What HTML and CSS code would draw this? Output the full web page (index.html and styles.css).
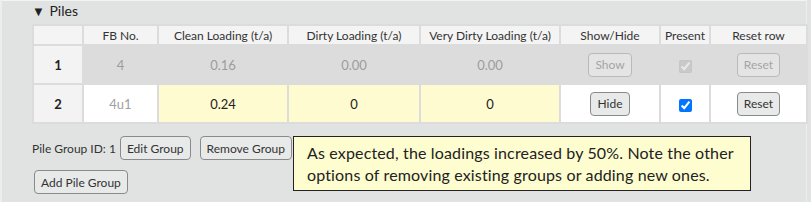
FILE: index.html
```html
<!DOCTYPE html>
<html>

<head>
    <link rel="stylesheet" href="styles.css">
</head>

<body>
    <div class="panel">
        <div class="toggle"><span class="arrow">▼</span> Piles</div>

        <table class="piles">
            <colgroup>
                <col style="width: 50px">
                <col style="width: 75px">
                <col style="width: 130px">
                <col style="width: 132px">
                <col style="width: 140px">
                <col style="width: 100px">
                <col style="width: 50px">
                <col style="width: 97px">
            </colgroup>
            <tr class="head">
                <th></th>
                <th>FB No.</th>
                <th>Clean Loading (t/a)</th>
                <th>Dirty Loading (t/a)</th>
                <th>Very Dirty Loading (t/a)</th>
                <th>Show/Hide</th>
                <th>Present</th>
                <th>Reset row</th>
            </tr>
            <tr class="off">
                <td class="num">1</td>
                <td>4</td>
                <td>0.16</td>
                <td>0.00</td>
                <td>0.00</td>
                <td><button disabled>Show</button></td>
                <td><input type="checkbox" checked disabled></td>
                <td><button disabled>Reset</button></td>
            </tr>
            <tr class="on">
                <td class="num">2</td>
                <td class="fb">4u1</td>
                <td class="edit">0.24</td>
                <td class="edit">0</td>
                <td class="edit">0</td>
                <td><button>Hide</button></td>
                <td><input type="checkbox" checked></td>
                <td><button>Reset</button></td>
            </tr>
        </table>

        <div class="group">
            <span class="label">Pile Group ID: 1</span>
            <button>Edit Group</button>
            <button class="remove">Remove Group</button>
        </div>
        <div class="add">
            <button>Add Pile Group</button>
        </div>

        <div class="note">
            As expected, the loadings increased by 50%. Note the other<br>
            options of removing existing groups or adding new ones.
        </div>
    </div>
</body>

</html>
```

FILE: styles.css
```css
html {
    background: #e1e3e2;
}

body {
    margin: 0;
    font-family: Lato, 'Open Sans', sans-serif;
    font-size: 12px;
    color: #333;
}

.panel {
    position: relative;
    height: 202px;
    width: 807px;
    border-top: 1px solid #f2f3f3;
    border-left: 2px solid #eceded;
    border-right: 1px solid #eceded;
    box-sizing: border-box;
    padding-left: 30px;
}

.toggle {
    height: 23px;
    line-height: 20px;
    font-size: 14px;
    color: #222;
}

.arrow {
    font-size: 13px;
    margin-right: 1px;
}

.piles {
    table-layout: fixed;
    width: 774px;
    border-collapse: collapse;
    text-align: center;
}

.piles th,
.piles td {
    border: 2px solid #dcdcdc;
    padding: 0;
}

.piles th {
    height: 18px;
    background: #f4f4f4;
    font-weight: normal;
    color: #333;
}

.piles td {
    height: 37px;
    font-size: 13px;
}

.off td {
    background: #dcdcdc;
    color: #9c9c9c;
}

.on td {
    background: #fff;
}

.piles td.num {
    background: #f3f3f3;
    color: #222;
    font-weight: bold;
}

.on .fb {
    color: #a0a0a0;
}

.on td.edit {
    background: #fefbd1;
    color: #222;
}

button {
    font-family: Lato, 'Open Sans', sans-serif;
    font-size: 12px;
    color: #333;
    height: 24px;
    padding: 0 6px;
    background: #e8eae9;
    border: 1px solid #8a8a8a;
    border-radius: 4px;
}

button:disabled {
    color: #a4a4a4;
    border-color: #b9b9b9;
    background: #e4e4e4;
}

input[type=checkbox] {
    width: 13px;
    height: 13px;
    margin: 0;
    vertical-align: middle;
}

.group {
    margin-top: 12px;
    display: flex;
    align-items: center;
}

.label {
    margin-right: 4px;
}

.remove {
    margin-left: 9px;
}

.add {
    margin-top: 10px;
    padding-left: 2px;
}

.note {
    position: absolute;
    left: 291px;
    top: 135px;
    width: 458px;
    height: 55px;
    box-sizing: border-box;
    border: 1px solid #222;
    background: #fefdd0;
    padding: 5px 0 0 13px;
    font-size: 16px;
    letter-spacing: 0.15px;
    line-height: 22px;
    color: #222;
}
```
